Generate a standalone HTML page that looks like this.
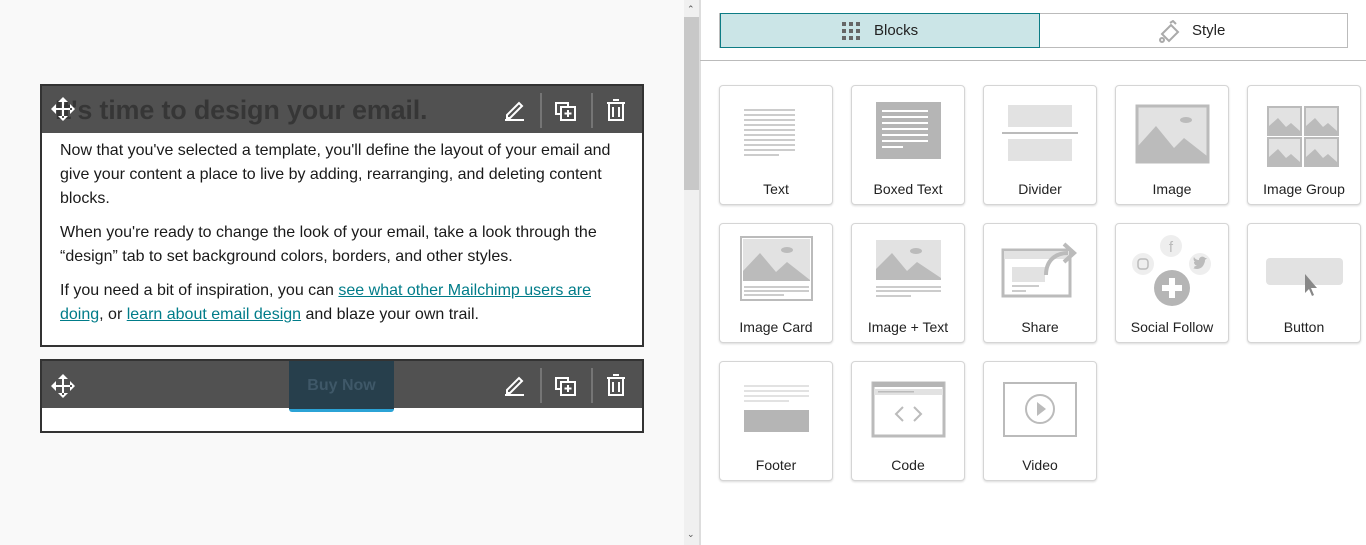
<!DOCTYPE html>
<html><head><meta charset="utf-8"><style>
*{margin:0;padding:0;box-sizing:border-box}
body{width:1366px;height:545px;overflow:hidden;background:#fff;font-family:"Liberation Sans",Arial,sans-serif;position:relative}
#left{position:absolute;left:0;top:0;width:684px;height:545px;background:#f9f9f9}
#sb{position:absolute;left:684px;top:0;width:16px;height:545px;background:#f0f0f0;border-right:1px solid #ddd}
#thumb{position:absolute;left:684px;top:17px;width:15px;height:173px;background:#c8c8c8}
.blk{position:absolute;left:40px;width:604px;border:2px solid #333;background:#fff}
.ov{position:absolute;left:0;top:0;width:600px;height:47px;background:rgba(60,60,60,.89)}
.ic{position:absolute;top:9px}
h1{position:absolute;left:13px;top:9px;font-size:27px;font-weight:bold;color:#111;letter-spacing:-0.2px}
.txt{position:absolute;left:18px;top:53px;width:570px;font-size:16px;line-height:24px;color:#1a1a1a}
.txt p{margin-bottom:10px}
.txt a{color:#007c89;text-decoration:underline}
#tabs{position:absolute;left:719px;top:13px;width:629px;height:35px;border:1px solid #bbb}
#tb{position:absolute;left:0;top:-1px;width:320px;height:35px;background:#cbe5e7;border:1px solid #0d7c85}
.tl{position:absolute;top:8px;font-size:15px;color:#222}
#hr{position:absolute;left:700px;top:60px;width:666px;height:1px;background:#bbb}
.card{position:absolute;width:114px;height:120px;border:1px solid #d5d5d5;border-radius:4px;background:#fff;box-shadow:0 1px 2px rgba(0,0,0,.15)}
.card span{position:absolute;left:0;right:0;top:95px;text-align:center;font-size:14px;color:#222}
.card svg{position:absolute;left:0;top:0}
</style></head><body>
<div id="left">
 <div class="blk" style="top:84px;height:263px">
  <h1>It's time to design your email.</h1>
  <div class="ov"></div>
  <svg class="ic" style="left:8px;top:10px" width="26" height="26" viewBox="0 0 26 26" fill="#fff"><path d="M12 4h2v18h-2zM4 12h18v2H4zM13 1l5 5H8zM13 25l5-5H8zM1 13l5-5v10zM25 13l-5-5v10z"/></svg>
  <div class="txt">
   <p>Now that you've selected a template, you'll define the layout of your email and give your content a place to live by adding, rearranging, and deleting content blocks.</p>
   <p>When you're ready to change the look of your email, take a look through the “design” tab to set background colors, borders, and other styles.</p>
   <p>If you need a bit of inspiration, you can <a>see what other Mailchimp users are doing</a>, or <a>learn about email design</a> and blaze your own trail.</p>
  </div>
 </div>
 <div class="blk" style="top:359px;height:74px">
  <div class="ov"></div>
  <div style="position:absolute;left:247px;top:0;width:105px;height:51px;background:#273f4c;border-bottom:3px solid #2ba3d6;border-radius:0 0 3px 3px;color:#3f5868;font-weight:bold;font-size:16px;text-align:center;line-height:50px">Buy Now</div>
  <svg class="ic" style="left:8px;top:12px" width="26" height="26" viewBox="0 0 26 26" fill="#fff"><path d="M12 4h2v18h-2zM4 12h18v2H4zM13 1l5 5H8zM13 25l5-5H8zM1 13l5-5v10zM25 13l-5-5v10z"/></svg>
 </div>
</div>
<div id="sb"></div><div id="thumb"></div>
<div style="position:absolute;left:687px;top:4px;font-size:9px;color:#555">⌃</div>
<div style="position:absolute;left:687px;top:529px;font-size:9px;color:#555">⌄</div>
<svg style="position:absolute;left:0;top:0" width="684" height="545">
 <g fill="none" stroke="#fff" stroke-width="2">
  <path d="M507 115l12-12 3 3-12 12h-3z"/><path d="M505 120h19"/>
  <rect x="556" y="103" width="12" height="11"/><rect x="561" y="107" width="14" height="13" fill="#4a4a4a"/><path d="M568 110v7M564.5 113.5h7"/>
  <path d="M607 103h18M613 100h6M609 104v16h14v-16M613 107v10M619 107v10"/>
 </g>
 <path d="M541 93v35M592 93v35" stroke="#999"/>
 <g fill="none" stroke="#fff" stroke-width="2">
  <path d="M507 390l12-12 3 3-12 12h-3z"/><path d="M505 395h19"/>
  <rect x="556" y="378" width="12" height="11"/><rect x="561" y="382" width="14" height="13" fill="#4a4a4a"/><path d="M568 385v7M564.5 388.5h7"/>
  <path d="M607 378h18M613 375h6M609 379v16h14v-16M613 382v10M619 382v10"/>
 </g>
 <path d="M541 368v35M592 368v35" stroke="#999"/>
</svg>
<div style="position:absolute;left:700px;top:0;width:1px;height:545px;background:#ddd"></div>
<div id="tabs">
 <div id="tb">
  <svg style="position:absolute;left:121px;top:8px" width="20" height="20" fill="#666"><rect x="0" y="0" width="4" height="4"/><rect x="7" y="0" width="4" height="4"/><rect x="14" y="0" width="4" height="4"/><rect x="0" y="7" width="4" height="4"/><rect x="7" y="7" width="4" height="4"/><rect x="14" y="7" width="4" height="4"/><rect x="0" y="14" width="4" height="4"/><rect x="7" y="14" width="4" height="4"/><rect x="14" y="14" width="4" height="4"/></svg>
  <div class="tl" style="left:153px">Blocks</div>
 </div>
 <svg style="position:absolute;left:438px;top:6px" width="24" height="24" fill="none" stroke="#aaa" stroke-width="2"><path d="M4 14l9-9 7 7-9 9z"/><path d="M12 3l3-2 3 3"/><circle cx="4" cy="20" r="2"/></svg>
 <div class="tl" style="left:472px">Style</div>
</div>
<div id="hr"></div>

<div class="card" style="left:719px;top:85px"><svg width="114" height="90" fill="#ccc"><rect x="24" y="23" width="51" height="2"/><rect x="24" y="28" width="51" height="2"/><rect x="24" y="33" width="51" height="2"/><rect x="24" y="38" width="51" height="2"/><rect x="24" y="43" width="51" height="2"/><rect x="24" y="48" width="51" height="2"/><rect x="24" y="53" width="51" height="2"/><rect x="24" y="58" width="51" height="2"/><rect x="24" y="63" width="51" height="2"/><rect x="24" y="68" width="35" height="2"/></svg><span>Text</span></div>
<div class="card" style="left:851px;top:85px"><svg width="114" height="90"><rect x="24" y="16" width="65" height="57" fill="#b5b5b5"/><g fill="#fff"><rect x="30" y="24" width="46" height="2"/><rect x="30" y="30" width="46" height="2"/><rect x="30" y="36" width="46" height="2"/><rect x="30" y="42" width="46" height="2"/><rect x="30" y="48" width="46" height="2"/><rect x="30" y="54" width="46" height="2"/><rect x="30" y="60" width="21" height="2"/></g></svg><span>Boxed Text</span></div>
<div class="card" style="left:983px;top:85px"><svg width="114" height="90"><rect x="24" y="19" width="64" height="22" fill="#e2e2e2"/><rect x="18" y="46" width="76" height="2" fill="#bbb"/><rect x="24" y="53" width="64" height="22" fill="#e2e2e2"/></svg><span>Divider</span></div>
<div class="card" style="left:1115px;top:85px"><svg width="114" height="90"><rect x="21" y="20" width="71" height="56" fill="#e2e2e2" stroke="#bbb" stroke-width="3"/><path d="M22 75V60l18-20 18 22 10-10 23 18v5z" fill="#bbb"/><ellipse cx="70" cy="34" rx="6" ry="3" fill="#bbb"/></svg><span>Image</span></div>
<div class="card" style="left:1247px;top:85px"><svg width="114" height="90"><g fill="#e2e2e2" stroke="#bbb" stroke-width="2"><rect x="20" y="21" width="33" height="28"/><rect x="57" y="21" width="33" height="28"/><rect x="20" y="52" width="33" height="28"/><rect x="57" y="52" width="33" height="28"/></g><g fill="#bbb"><path d="M21 48v-8l9-8 8 9 5-4 9 8v3z"/><path d="M58 48v-8l9-8 8 9 5-4 9 8v3z"/><path d="M21 79v-8l9-8 8 9 5-4 9 8v3z"/><path d="M58 79v-8l9-8 8 9 5-4 9 8v3z"/></g></svg><span>Image Group</span></div>

<div class="card" style="left:719px;top:223px"><svg width="114" height="90"><rect x="21" y="13" width="71" height="63" fill="#fff" stroke="#bbb" stroke-width="2"/><rect x="23" y="15" width="67" height="42" fill="#e2e2e2"/><path d="M23 57V47l17-18 16 19 11-10 23 18v1z" fill="#bbb"/><ellipse cx="67" cy="26" rx="6" ry="3" fill="#bbb"/><rect x="24" y="62" width="65" height="2" fill="#ccc"/><rect x="24" y="66" width="65" height="2" fill="#ccc"/><rect x="24" y="70" width="40" height="2" fill="#ccc"/></svg><span>Image Card</span></div>
<div class="card" style="left:851px;top:223px"><svg width="114" height="90"><rect x="24" y="16" width="65" height="40" fill="#e2e2e2"/><path d="M24 56V45l16-16 15 18 10-9 24 16v2z" fill="#bbb"/><ellipse cx="64" cy="27" rx="6" ry="3" fill="#bbb"/><rect x="24" y="62" width="65" height="2" fill="#ccc"/><rect x="24" y="66" width="65" height="2" fill="#ccc"/><rect x="24" y="71" width="35" height="2" fill="#ccc"/></svg><span>Image + Text</span></div>
<div class="card" style="left:983px;top:223px"><svg width="114" height="90"><rect x="19" y="26" width="67" height="46" fill="#fff" stroke="#bbb" stroke-width="3"/><rect x="20" y="27" width="65" height="8" fill="#e2e2e2"/><rect x="28" y="43" width="33" height="15" fill="#e2e2e2"/><rect x="28" y="61" width="27" height="2" fill="#ccc"/><rect x="28" y="66" width="14" height="2" fill="#ccc"/><path d="M62 51c0-15 10-22 22-22" fill="none" stroke="#bbb" stroke-width="4"/><path d="M80 20l10 9-10 9" fill="none" stroke="#bbb" stroke-width="4"/></svg><span>Share</span></div>
<div class="card" style="left:1115px;top:223px"><svg width="114" height="90"><circle cx="55" cy="22" r="11" fill="#eee"/><text x="55" y="28" font-size="15" font-family="Liberation Sans" text-anchor="middle" fill="#bbb">f</text><circle cx="27" cy="40" r="11" fill="#eee"/><rect x="22" y="35" width="10" height="10" rx="3" fill="none" stroke="#bbb" stroke-width="1.5"/><circle cx="25" cy="40" r="0" /><circle cx="84" cy="40" r="11" fill="#eee"/><path d="M77 44c4 2 9 1 11-4 1-2 1-3 1-4l2-2-2 0c-1-2-5-2-6 1v1c-2 0-4-1-5-3-1 2 0 4 1 5h-1c0 2 1 3 3 4-1 0-2 0-3 1 0 1 1 1 1 1z" fill="#bbb"/><circle cx="56" cy="64" r="18" fill="#b5b5b5"/><path d="M53 54h6v7h7v6h-7v7h-6v-7h-7v-6h7z" fill="#fff"/></svg><span>Social Follow</span></div>
<div class="card" style="left:1247px;top:223px"><svg width="114" height="90"><rect x="18" y="34" width="77" height="27" rx="4" fill="#e2e2e2"/><path d="M57 50v19l4-4 3 7 2-1-3-7h6z" fill="#888"/></svg><span>Button</span></div>

<div class="card" style="left:719px;top:361px"><svg width="114" height="90"><rect x="24" y="23" width="65" height="2" fill="#e2e2e2"/><rect x="24" y="28" width="65" height="2" fill="#e2e2e2"/><rect x="24" y="33" width="65" height="2" fill="#e2e2e2"/><rect x="24" y="38" width="45" height="2" fill="#e2e2e2"/><rect x="24" y="48" width="65" height="22" fill="#b5b5b5"/></svg><span>Footer</span></div>
<div class="card" style="left:851px;top:361px"><svg width="114" height="90"><rect x="21" y="21" width="71" height="53" fill="#fff" stroke="#bbb" stroke-width="3"/><rect x="21" y="20" width="71" height="5" fill="#b5b5b5"/><rect x="22" y="27" width="69" height="6" fill="#e2e2e2"/><rect x="26" y="29" width="36" height="1.5" fill="#bbb"/><path d="M51 45l-7 7 7 7M62 45l7 7-7 7" fill="none" stroke="#bbb" stroke-width="2"/></svg><span>Code</span></div>
<div class="card" style="left:983px;top:361px"><svg width="114" height="90"><rect x="20" y="21" width="72" height="53" fill="#fff" stroke="#bbb" stroke-width="2"/><circle cx="56" cy="47" r="14" fill="none" stroke="#bbb" stroke-width="2"/><path d="M53 40v14l9-7z" fill="#bbb"/></svg><span>Video</span></div>
</body></html>
